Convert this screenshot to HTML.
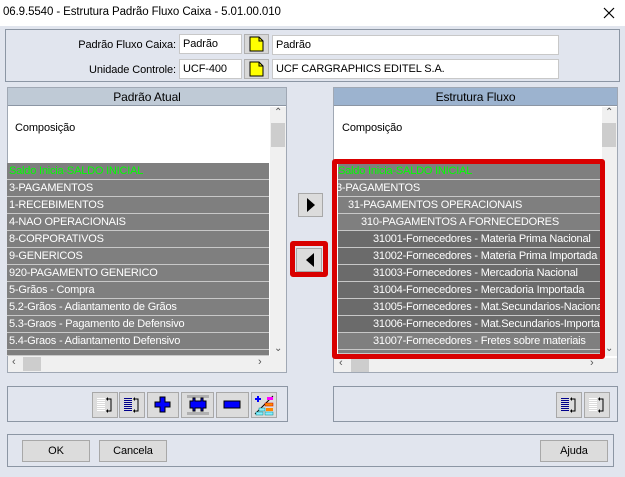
<!DOCTYPE html>
<html><head><meta charset="utf-8"><style>
*{box-sizing:border-box;margin:0;padding:0}
body{width:625px;height:477px;background:#e1e5ee;font-family:"Liberation Sans",sans-serif;font-size:11px;letter-spacing:-0.1px;position:relative;overflow:hidden;color:#000}
.a{position:absolute}
.title{left:0;top:0;width:625px;height:26px;background:#fff}
.inp{background:#fff;border:1px solid #c8c8c8;padding:3px 0 0 3px;height:20px;white-space:nowrap}
.ib{background:#d8d8d8;border:1px solid #b0b0b0}
.panel{border:1px solid #8c96a4}
.row{position:absolute;height:17px;background:#7f7f7f;color:#fff;border-bottom:1px solid #c8c8c8;white-space:nowrap;overflow:hidden;line-height:16px;font-size:11px;letter-spacing:-0.2px}
.dk{background:#6b6b6b}
.btn{position:absolute;background:#dcdcdc;border:1px solid #a8a8a8}
.sb{background:#f0f0f0}
.th{background:#cdcdcd}
.cap{text-align:center;line-height:19px;font-size:12px}
</style></head><body>
<div class="a title"></div>
<div class="a" style="left:3px;top:6px;font-size:11.5px">06.9.5540 - Estrutura Padrão Fluxo Caixa - 5.01.00.010</div>
<svg class="a" style="left:603px;top:7px" width="12" height="12"><path d="M1 1L11 11M11 1L1 11" stroke="#000" stroke-width="1.2"/></svg>

<div class="a panel" style="left:5px;top:29px;width:615px;height:53px"></div>
<div class="a" style="left:60px;top:39px;width:116px;text-align:right">Padrão Fluxo Caixa:</div>
<div class="a" style="left:60px;top:64px;width:116px;text-align:right">Unidade Controle:</div>
<div class="a inp" style="left:179px;top:34px;width:63px">Padrão</div>
<div class="a inp" style="left:179px;top:59px;width:63px">UCF-400</div>
<div class="a inp" style="left:272px;top:35px;width:287px">Padrão</div>
<div class="a inp" style="left:272px;top:59px;width:287px">UCF CARGRAPHICS EDITEL S.A.</div>
<div class="a ib" style="left:244px;top:34px;width:25px;height:20px"></div>
<div class="a ib" style="left:244px;top:59px;width:25px;height:20px"></div>
<svg class="a" style="left:249px;top:36px" width="15" height="16"><path d="M1 1H10L14 5V15H1Z" fill="#ff0" stroke="#000"/><path d="M10 1V5H14" fill="none" stroke="#000"/></svg>
<svg class="a" style="left:249px;top:61px" width="15" height="16"><path d="M1 1H10L14 5V15H1Z" fill="#ff0" stroke="#000"/><path d="M10 1V5H14" fill="none" stroke="#000"/></svg>

<!-- left list -->
<div class="a" style="left:7px;top:87px;width:280px;height:286px;background:#fff;border:1px solid #a0a8b4"></div>
<div class="a cap" style="left:8px;top:88px;width:278px;height:18px;background:#bfcad6;border-bottom:1px solid #8c96a4">Padrão Atual</div>
<div class="a" style="left:15px;top:122px">Composição</div>
<div class="a sb" style="left:270px;top:107px;width:16px;height:249px"></div>
<div class="a th" style="left:271px;top:123px;width:14px;height:24px"></div>
<div class="a" style="left:274px;top:107px;font-size:10px;color:#555">&#8963;</div>
<div class="a" style="left:274px;top:343px;font-size:10px;color:#555">&#8964;</div>
<div class="a sb" style="left:8px;top:356px;width:278px;height:16px"></div>
<div class="a th" style="left:23px;top:357px;width:18px;height:14px"></div>
<div class="a" style="left:12px;top:356px;color:#555">&#8249;</div>
<div class="a" style="left:258px;top:356px;color:#555">&#8250;</div>
<div class="row" style="left:7px;top:163px;width:262px;color:#0f0;padding-left:2px">Saldo Inicia-SALDO INICIAL</div>
<div class="row" style="left:7px;top:180px;width:262px;padding-left:2px">3-PAGAMENTOS</div>
<div class="row" style="left:7px;top:197px;width:262px;padding-left:2px">1-RECEBIMENTOS</div>
<div class="row" style="left:7px;top:214px;width:262px;padding-left:2px">4-NAO OPERACIONAIS</div>
<div class="row" style="left:7px;top:231px;width:262px;padding-left:2px">8-CORPORATIVOS</div>
<div class="row" style="left:7px;top:248px;width:262px;padding-left:2px">9-GENERICOS</div>
<div class="row" style="left:7px;top:265px;width:262px;padding-left:2px">920-PAGAMENTO GENERICO</div>
<div class="row" style="left:7px;top:282px;width:262px;padding-left:2px">5-Grãos - Compra</div>
<div class="row" style="left:7px;top:299px;width:262px;padding-left:2px">5.2-Grãos - Adiantamento de Grãos</div>
<div class="row" style="left:7px;top:316px;width:262px;padding-left:2px">5.3-Graos - Pagamento de Defensivo</div>
<div class="row" style="left:7px;top:333px;width:262px;padding-left:2px">5.4-Graos - Adiantamento Defensivo</div>
<div class="row" style="left:7px;top:350px;width:262px;height:6px"></div>

<!-- arrows -->
<div class="btn" style="left:298px;top:193px;width:25px;height:24px"></div>
<svg class="a" style="left:306px;top:198px" width="10" height="14"><path d="M1 0L9 7L1 14Z" fill="#000"/></svg>
<div class="a" style="left:290px;top:241px;width:38px;height:36px;border:5px solid #d90000;border-radius:3px"></div>
<div class="btn" style="left:296px;top:248px;width:26px;height:24px"></div>
<svg class="a" style="left:305px;top:253px" width="10" height="14"><path d="M9 0L1 7L9 14Z" fill="#000"/></svg>

<!-- right list -->
<div class="a" style="left:333px;top:87px;width:285px;height:286px;background:#fff;border:1px solid #a0a8b4"></div>
<div class="a cap" style="left:334px;top:88px;width:283px;height:18px;background:#9cb3cf;border-bottom:1px solid #8c96a4">Estrutura Fluxo</div>
<div class="a" style="left:342px;top:122px">Composição</div>
<div class="a sb" style="left:602px;top:107px;width:15px;height:249px"></div>
<div class="a th" style="left:602px;top:123px;width:14px;height:24px"></div>
<div class="a" style="left:605px;top:107px;font-size:10px;color:#555">&#8963;</div>
<div class="a" style="left:605px;top:343px;font-size:10px;color:#555">&#8964;</div>
<div class="a sb" style="left:334px;top:358px;width:283px;height:14px"></div>
<div class="a th" style="left:351px;top:359px;width:18px;height:13px"></div>
<div class="a" style="left:339px;top:357px;color:#555">&#8249;</div>
<div class="a" style="left:590px;top:357px;color:#555">&#8250;</div>
<div class="row" style="left:338px;top:163px;width:262px;color:#0f0">Saldo Inicia-SALDO INICIAL</div>
<div class="row" style="left:338px;top:180px;width:262px;text-indent:-2px">3-PAGAMENTOS</div>
<div class="row" style="left:338px;top:197px;width:262px;padding-left:10px">31-PAGAMENTOS OPERACIONAIS</div>
<div class="row" style="left:338px;top:214px;width:262px;padding-left:23px">310-PAGAMENTOS A FORNECEDORES</div>
<div class="row dk" style="left:338px;top:231px;width:262px;padding-left:35px">31001-Fornecedores - Materia Prima Nacional</div>
<div class="row dk" style="left:338px;top:248px;width:262px;padding-left:35px">31002-Fornecedores - Materia Prima Importada</div>
<div class="row dk" style="left:338px;top:265px;width:262px;padding-left:35px">31003-Fornecedores - Mercadoria Nacional</div>
<div class="row dk" style="left:338px;top:282px;width:262px;padding-left:35px">31004-Fornecedores - Mercadoria Importada</div>
<div class="row dk" style="left:338px;top:299px;width:262px;padding-left:35px">31005-Fornecedores - Mat.Secundarios-Nacional</div>
<div class="row dk" style="left:338px;top:316px;width:262px;padding-left:35px">31006-Fornecedores - Mat.Secundarios-Importada</div>
<div class="row" style="left:338px;top:333px;width:262px;padding-left:35px">31007-Fornecedores - Fretes sobre materiais</div>
<div class="row" style="left:338px;top:350px;width:262px;height:4px"></div>
<div class="a" style="left:332px;top:159px;width:273px;height:200px;border:5px solid #d90000;border-radius:3px"></div>

<!-- toolbars -->
<div class="a panel" style="left:7px;top:386px;width:281px;height:36px"></div>
<div class="a panel" style="left:333px;top:386px;width:285px;height:36px"></div>
<div class="btn" style="left:92px;top:392px;width:26px;height:26px"></div>
<div class="btn" style="left:119px;top:392px;width:26px;height:26px"></div>
<div class="btn" style="left:147px;top:392px;width:32px;height:26px"></div>
<div class="btn" style="left:181px;top:392px;width:33px;height:26px"></div>
<div class="btn" style="left:216px;top:392px;width:33px;height:26px"></div>
<div class="btn" style="left:251px;top:392px;width:26px;height:26px"></div>
<div class="btn" style="left:556px;top:392px;width:26px;height:26px"></div>
<div class="btn" style="left:584px;top:392px;width:26px;height:26px"></div>
<svg class="a" style="left:96px;top:396px" width="18" height="18"><g stroke="#fff" stroke-width="1"><path d="M1 2.5H9M1 4.5H9M1 6.5H9M1 8.5H9M1 10.5H9M1 12.5H9M1 14.5H9"/></g><path d="M11 3H15V15H11" fill="none" stroke="#000"/><path d="M10 3L12 1V5Z M10 15L12 13V17Z" fill="#000"/></svg>
<svg class="a" style="left:123px;top:396px" width="18" height="18"><g stroke="#00008b"><path d="M1 2.5H9M1 4.5H9M1 6.5H9M1 8.5H9M1 10.5H9M1 12.5H9M1 14.5H9"/></g><path d="M11 3H15V15H11" fill="none" stroke="#000"/><path d="M10 3L12 1V5Z M10 15L12 13V17Z" fill="#000"/></svg>
<svg class="a" style="left:154px;top:396px" width="18" height="18"><path d="M6 1H11V6H16V11H11V16H6V11H1V6H6Z" fill="#00f" stroke="#000"/></svg>
<svg class="a" style="left:186px;top:395px" width="24" height="20"><rect x="1" y="0" width="22" height="3" fill="#b0b0b0"/><rect x="1" y="17" width="22" height="3" fill="#b0b0b0"/><path d="M4 6H7V3H9V6H15V3H17V6H20V13H17V16H15V13H9V16H7V13H4Z" fill="#00f" stroke="#000"/></svg>
<svg class="a" style="left:223px;top:400px" width="18" height="10"><rect x="1" y="1" width="16" height="7" fill="#00f" stroke="#000"/></svg>
<svg class="a" style="left:253px;top:394px" width="22" height="22"><path d="M2 20L20 2" stroke="#000"/><path d="M5 2V8M2 5H8" stroke="#00f" stroke-width="2"/><rect x="14" y="3" width="6" height="3" fill="#f0f"/><rect x="12" y="9" width="8" height="3" fill="#f80" stroke="#c00" stroke-width=".5"/><rect x="6" y="14" width="6" height="3" fill="#8ef" stroke="#088" stroke-width=".5"/><rect x="13" y="14" width="7" height="3" fill="#f80"/><rect x="3" y="18" width="7" height="3" fill="#8ef" stroke="#088" stroke-width=".5"/><rect x="12" y="18" width="8" height="3" fill="#8ef" stroke="#088" stroke-width=".5"/></svg>
<svg class="a" style="left:560px;top:396px" width="18" height="18"><g stroke="#00008b"><path d="M1 2.5H9M1 4.5H9M1 6.5H9M1 8.5H9M1 10.5H9M1 12.5H9M1 14.5H9"/></g><path d="M11 3H15V15H11" fill="none" stroke="#000"/><path d="M10 3L12 1V5Z M10 15L12 13V17Z" fill="#000"/></svg>
<svg class="a" style="left:588px;top:396px" width="18" height="18"><g stroke="#fff"><path d="M1 2.5H9M1 4.5H9M1 6.5H9M1 8.5H9M1 10.5H9M1 12.5H9M1 14.5H9"/></g><path d="M11 3H15V15H11" fill="none" stroke="#000"/><path d="M10 3L12 1V5Z M10 15L12 13V17Z" fill="#000"/></svg>

<!-- bottom -->
<div class="a panel" style="left:7px;top:434px;width:607px;height:33px"></div>
<div class="btn" style="left:22px;top:440px;width:68px;height:22px;text-align:center;line-height:20px">OK</div>
<div class="btn" style="left:99px;top:440px;width:68px;height:22px;text-align:center;line-height:20px">Cancela</div>
<div class="btn" style="left:540px;top:440px;width:68px;height:22px;text-align:center;line-height:20px">Ajuda</div>
</body></html>
